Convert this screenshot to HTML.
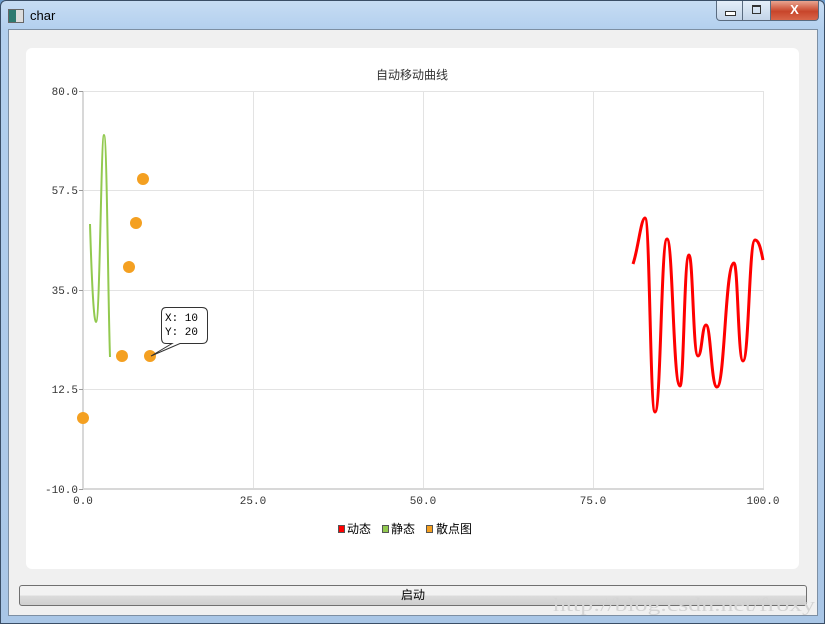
<!DOCTYPE html>
<html><head><meta charset="utf-8"><style>
body{margin:0;width:825px;height:624px;overflow:hidden;background:#6d9ccc;font-family:"Liberation Sans","Noto Sans CJK SC",sans-serif;position:relative}
.frame{position:absolute;left:0;top:0;width:823px;height:622px;border:1px solid #3a4e66;border-radius:6px 6px 0 0;background:linear-gradient(#c6dcf3,#b2cfee 30px,#a9c6e6);}
.title{position:absolute;left:29px;top:7px;font-size:13px;color:#000}
.icon{position:absolute;left:7px;top:8px;width:14px;height:12px;border:1px solid #666;background:linear-gradient(90deg,#2e7a70 50%,#ddd 50%)}
.client{position:absolute;left:8px;top:29px;width:808px;height:585px;background:#f0f0f0;border:1px solid #7d8fa3}
.card{position:absolute;left:17px;top:18px;width:773px;height:521px;background:#fff;border-radius:6px}
.btn{position:absolute;left:10px;top:555px;width:786px;height:19px;border:1px solid #707070;border-radius:3px;background:linear-gradient(#f2f2f2 50%,#dcdcdc 50%,#cfcfcf);text-align:center;font-size:12px;line-height:19px}
.wb{position:absolute;top:0;height:19px;border:1px solid #5a6b80;border-top:none}
</style></head><body>
<div class="frame">
<div class="icon"></div><div class="title">char</div>
<div class="wb" style="left:715px;width:25px;background:linear-gradient(#e4eef9,#c3d4e8);border-radius:0 0 0 4px"><div style="position:absolute;left:8px;top:10px;width:9px;height:3px;border:1px solid #333;background:#fff"></div></div>
<div class="wb" style="left:741px;width:27px;background:linear-gradient(#e4eef9,#c3d4e8)"><div style="position:absolute;left:9px;top:4px;width:7px;height:6px;border:1px solid #333;border-top-width:2px"></div></div>
<div class="wb" style="left:769px;width:47px;background:linear-gradient(#e9a590,#c8452a 55%,#d8664a);border-radius:0 0 4px 0;color:#fff;font-weight:bold;text-align:center;font-size:13px;line-height:17px">X</div>
</div>
<div class="client">
<div class="card"></div>
<div class="btn">启动</div>
</div>
<svg style="position:absolute;left:0;top:0" width="825" height="624">
<g stroke="#e3e3e3" stroke-width="1">
<line x1="253.5" y1="91" x2="253.5" y2="489"/><line x1="423.5" y1="91" x2="423.5" y2="489"/><line x1="593.5" y1="91" x2="593.5" y2="489"/><line x1="763.5" y1="91" x2="763.5" y2="489"/>
<line x1="83" y1="91.5" x2="763" y2="91.5"/><line x1="83" y1="190.5" x2="763" y2="190.5"/><line x1="83" y1="290.5" x2="763" y2="290.5"/><line x1="83" y1="389.5" x2="763" y2="389.5"/>
</g>
<g stroke="#d8d8d8" stroke-width="2"><line x1="83" y1="91" x2="83" y2="490"/><line x1="82" y1="489" x2="764" y2="489"/></g>
<g stroke="#999"><line x1="79" y1="91.5" x2="83" y2="91.5"/><line x1="79" y1="190.5" x2="83" y2="190.5"/><line x1="79" y1="290.5" x2="83" y2="290.5"/><line x1="79" y1="389.5" x2="83" y2="389.5"/><line x1="79" y1="489.5" x2="83" y2="489.5"/></g>
<g font-family="Liberation Mono,monospace" font-size="11" fill="#333" text-anchor="end">
<text x="78" y="95">80.0</text><text x="78" y="194">57.5</text><text x="78" y="294">35.0</text><text x="78" y="393">12.5</text><text x="78" y="493">-10.0</text>
</g>
<g font-family="Liberation Mono,monospace" font-size="11" fill="#333" text-anchor="middle">
<text x="83" y="504">0.0</text><text x="253" y="504">25.0</text><text x="423" y="504">50.0</text><text x="593" y="504">75.0</text><text x="763" y="504">100.0</text>
</g>
<text x="412" y="79" font-size="12" fill="#333" text-anchor="middle" font-family="Liberation Sans,Noto Sans CJK SC,sans-serif">自动移动曲线</text>
<path d="M90,224 C92,290 94,322 96,322 C100,322 101,135 104,135 C107,135 108,300 110,357" stroke="#92c94f" stroke-width="2" fill="none"/>
<path d="M633,264 C638,250 641,218 645,218 C650,218 650,412 655,412 C661,412 661,239 667,239 C673,239 673,386 680,386 C684,386 684,255 689,255 C693,255 693,356 698,356 C702,356 702,325 706,325 C711,325 711,387 717,387 C725,387 725,263 734,263 C738,263 738,361 743,361 C749,361 749,240 755,240 C759,240 761,250 763,260" stroke="#ff0000" stroke-width="3" fill="none"/>
<g fill="#f4a021">
<circle cx="83" cy="418" r="6"/><circle cx="122" cy="356" r="6"/><circle cx="129" cy="267" r="6"/><circle cx="136" cy="223" r="6"/><circle cx="143" cy="179" r="6"/><circle cx="150" cy="356" r="6"/>
</g>
<path d="M166,307.5 H202 Q207.5,307.5 207.5,313 V338 Q207.5,343.5 202,343.5 H180 L151,356 L172,343.5 H166 Q161.5,343.5 161.5,338 V313 Q161.5,307.5 166,307.5 Z" fill="#fff" stroke="#333"/>
<g font-family="Liberation Mono,monospace" font-size="11" fill="#000"><text x="165" y="321">X: 10</text><text x="165" y="335">Y: 20</text></g>
<g stroke="#555"><rect x="338.5" y="525.5" width="6" height="7" fill="#f00"/><rect x="382.5" y="525.5" width="6" height="7" fill="#92c94f"/><rect x="426.5" y="525.5" width="6" height="7" fill="#f4a021"/></g>
<g font-size="12" fill="#000" font-family="Liberation Sans,Noto Sans CJK SC,sans-serif"><text x="347" y="533">动态</text><text x="391" y="533">静态</text><text x="436" y="533">散点图</text></g>
<text x="553" y="611" font-family="Liberation Serif,serif" font-size="19" fill="#d4d4d4" textLength="262" lengthAdjust="spacingAndGlyphs">http://blog.csdn.net/froxy</text>
</svg>
</body></html>
